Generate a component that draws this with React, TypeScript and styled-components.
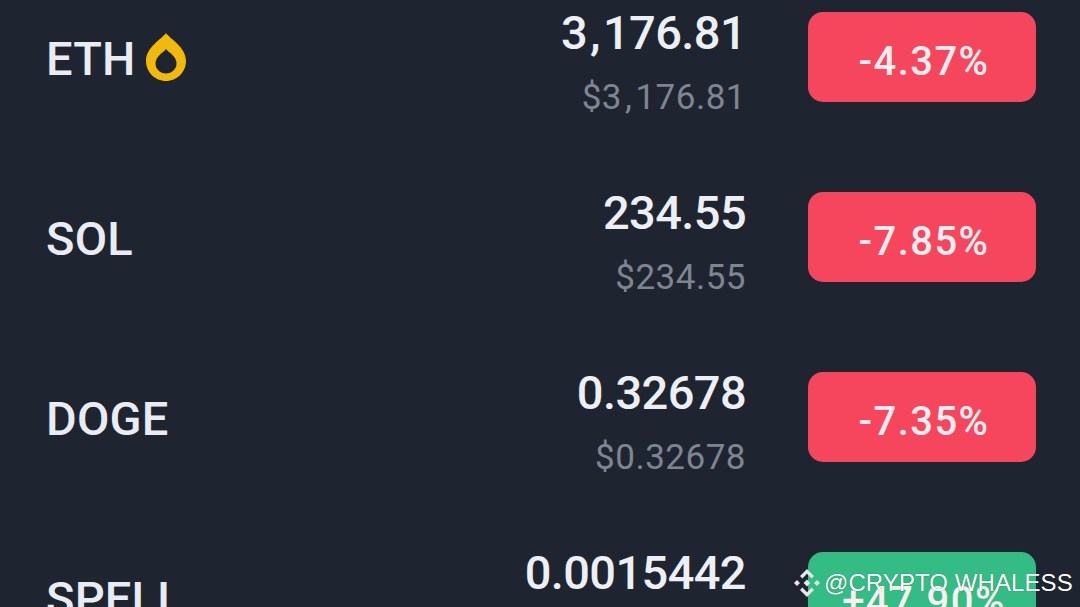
import React from "react";
import styled, { createGlobalStyle } from "styled-components";

const Global = createGlobalStyle`
  html, body { margin: 0; padding: 0; background: #1e2530; }
`;

const Screen = styled.div`
  position: relative;
  width: 1080px;
  height: 607px;
  overflow: hidden;
  background: #1e2530;
  font-family: Roboto, "Liberation Sans", sans-serif;
`;

const List = styled.div`
  display: flex;
  flex-direction: column;
  margin-top: -33px;
`;

const Row = styled.div`
  display: flex;
  align-items: center;
  height: 180px;
  flex: none;
  padding: 0 44px 0 46px;
  box-sizing: border-box;
`;

const Name = styled.div`
  flex: 1;
  display: flex;
  align-items: center;
  gap: 9px;
  margin-top: 2px;
  font-size: 47px;
  font-weight: 500;
  letter-spacing: 0.2px;
  color: #e9ecf2;
`;

const Prices = styled.div`
  display: flex;
  flex-direction: column;
  align-items: flex-end;
  margin-top: 17px;
  margin-right: 62px;
`;

const Price = styled.div`
  font-size: 47px;
  font-weight: 500;
  line-height: 64px;
  letter-spacing: -0.6px;
  color: #eceff4;
`;

const Fiat = styled.div`
  font-size: 35px;
  font-weight: 400;
  line-height: 64px;
  letter-spacing: 0.5px;
  margin-top: 1px;
  color: #7f8590;
`;

const Comma = styled.span`
  margin: 0 3px;
`;

const Badge = styled.div<{ $up?: boolean }>`
  width: 228px;
  height: 90px;
  flex: none;
  display: flex;
  align-items: center;
  justify-content: center;
  border-radius: 15px;
  background: ${(p) => (p.$up ? "#33bd85" : "#f6465d")};
  color: #fbeef0;
  font-size: 40px;
  font-weight: 500;
  letter-spacing: 1.4px;
  padding: 9px 0 0 4px;
  box-sizing: border-box;
`;

const Watermark = styled.div`
  position: absolute;
  left: 793px;
  top: 568px;
  display: flex;
  align-items: center;
  gap: 3px;
  color: #ffffff;
  font-family: "Liberation Sans", Arial, sans-serif;
  font-size: 24px;
  line-height: 30px;
  letter-spacing: 0.08px;
  white-space: nowrap;
  text-shadow: 0 0 1px rgba(0, 0, 0, 0.55);
`;

const DropIcon = styled.svg`
  flex: none;
  margin-top: -3px;
`;

const Drop = () => (
  <DropIcon width="42" height="50" viewBox="0 0 42 50">
    <path
      fillRule="evenodd"
      fill="#f0b90b"
      d="M21 1 C25 7 41 15 41 29 C41 40 32 49 21 49 C10 49 1 40 1 29 C1 15 17 7 21 1 Z M21 17 C18 21 10.5 24 10.5 31.5 C10.5 37 15 41.5 21 41.5 C27 41.5 31.5 37 31.5 31.5 C31.5 24 24 21 21 17 Z"
    />
  </DropIcon>
);

const Logo = () => (
  <svg width="28" height="28" viewBox="0 0 28 28" fill="#e6e6e6">
    <path d="M14 0 L21 7 L18.6 9.4 L14 4.8 L9.4 9.4 L7 7 Z" />
    <path d="M14 28 L21 21 L18.6 18.6 L14 23.2 L9.4 18.6 L7 21 Z" />
    <path d="M4 11 L7 14 L4 17 L1 14 Z" />
    <path d="M24 11 L27 14 L24 17 L21 14 Z" />
    <path d="M14 10.6 L17.4 14 L14 17.4 L10.6 14 Z" />
  </svg>
);

const withComma = (value: string) => {
  const [head, tail] = value.split(",");
  return tail === undefined ? (
    value
  ) : (
    <>
      {head}
      <Comma>,</Comma>
      {tail}
    </>
  );
};

const rows = [
  { name: "ETH", price: "3,176.81", fiat: "$3,176.81", change: "-4.37%", drop: true },
  { name: "SOL", price: "234.55", fiat: "$234.55", change: "-7.85%" },
  { name: "DOGE", price: "0.32678", fiat: "$0.32678", change: "-7.35%" },
  { name: "SPELL", price: "0.0015442", fiat: "$0.0015442", change: "+47.90%", up: true },
];

export default function App() {
  return (
    <Screen>
      <Global />
      <List>
        {rows.map((r) => (
          <Row key={r.name}>
            <Name>
              {r.name}
              {r.drop && <Drop />}
            </Name>
            <Prices>
              <Price>{withComma(r.price)}</Price>
              <Fiat>{withComma(r.fiat)}</Fiat>
            </Prices>
            <Badge $up={r.up}>{r.change}</Badge>
          </Row>
        ))}
      </List>
      <Watermark>
        <Logo />
        @CRYPTO WHALESS
      </Watermark>
    </Screen>
  );
}
